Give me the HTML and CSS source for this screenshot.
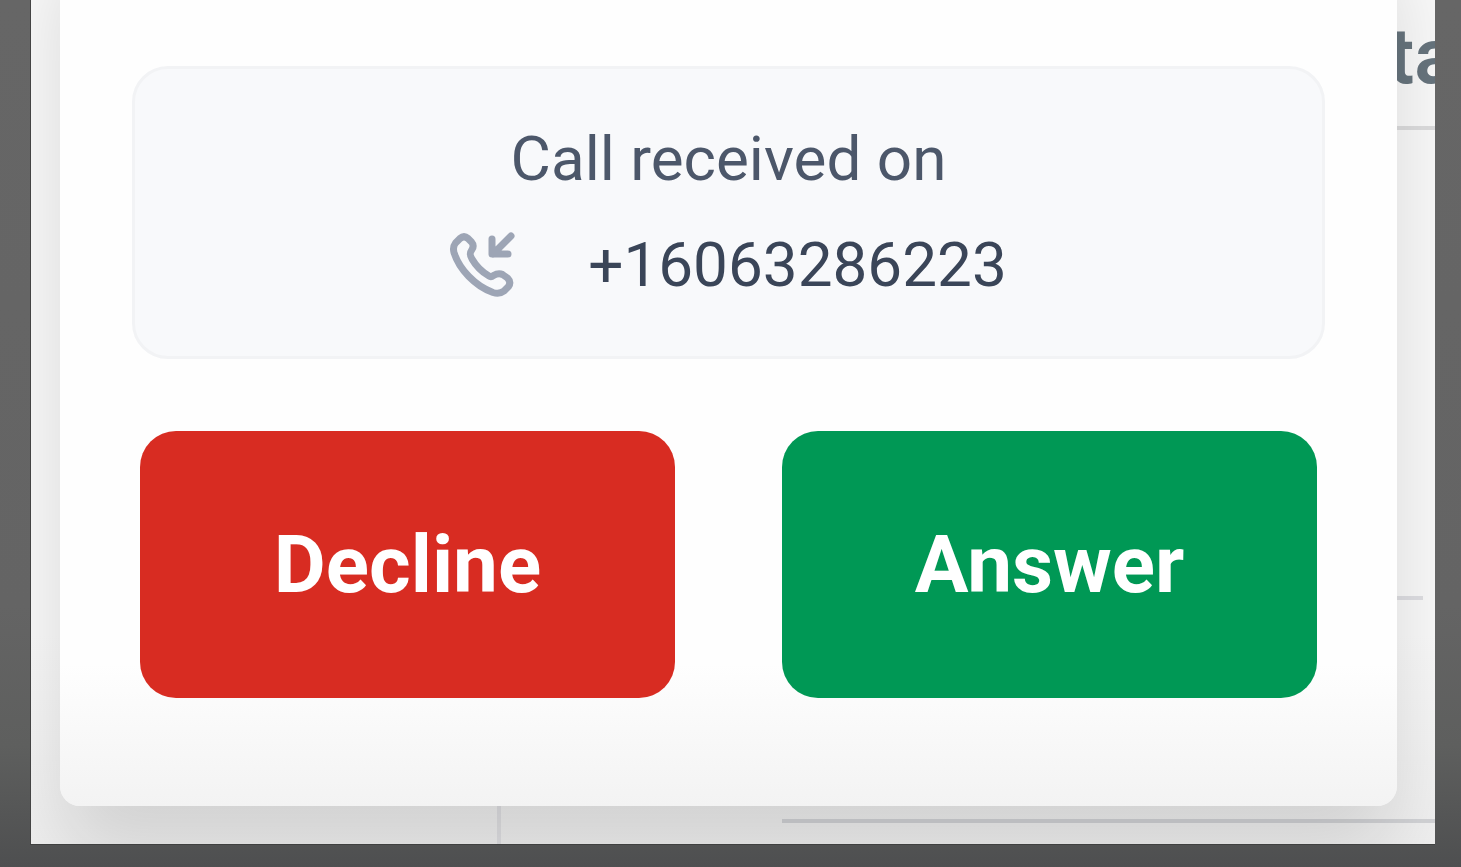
FILE: index.html
```html
<!DOCTYPE html>
<html lang="en">
<head>
<meta charset="utf-8">
<meta name="viewport" content="width=device-width, initial-scale=1">
<title>Incoming call</title>
<link rel="stylesheet" href="styles.css">
</head>
<body>
<div class="backdrop">
  <div class="screen">
    <div class="page">
      <header class="page-header"><span class="page-title">ta</span></header>
      <div class="page-section"></div>
      <div class="page-footer">
        <div class="page-side"></div>
        <div class="page-rule"></div>
      </div>
    </div>
    <main class="dialog" role="dialog" aria-label="Incoming call">
      <section class="call-info">
        <p class="call-label">Call received on</p>
        <div class="call-line">
          <svg class="call-icon" viewBox="0 0 64 64" aria-hidden="true">
            <path d="M10 5.500Q14 2 18 5.500L21.500 9Q24.500 12.500 22 16.500C19.500 20 19.500 22 22 26C26 33 32 39 39 43Q41 44.500 43.500 42.500Q48.500 39.500 52.500 41.500L57.500 45Q61.500 49 58.500 53.500L54 58Q49.500 61.500 43 59.500C25 53 9 36 4 19.500Q2.500 14 5.500 10Z"/>
            <path d="M61 3L43 21M42 6V21H58"/>
          </svg>
          <span class="call-number">+16063286223</span>
        </div>
      </section>
      <div class="actions">
        <button class="action decline" type="button">Decline</button>
        <button class="action answer" type="button">Answer</button>
      </div>
    </main>
  </div>
</div>
</body>
</html>
```
FILE: styles.css
```css
* {
  box-sizing: border-box;
}

body {
  margin: 0;
  font-family: Roboto, "Liberation Sans", sans-serif;
}

.backdrop {
  display: flex;
  min-height: 100vh;
  padding: 0 26px 22px 30px;
  background: linear-gradient(#666 0%, #646464 70%, #5e5f5e 86%, #4e4f50 100%);
}

.screen {
  display: grid;
  grid-template: 1fr / 1fr;
  flex: 1;
  overflow: hidden;
  border-left: 1px solid #444;
  border-bottom: 1px solid #404141;
  background: linear-gradient(#f9f9f9 0%, #f9f9f9 75%, #efefef 100%);
}

.page,
.dialog {
  grid-area: 1 / 1;
  min-width: 0;
}

.page {
  display: flex;
  flex-direction: column;
}

.page-header {
  display: flex;
  justify-content: flex-end;
  height: 130px;
  margin-left: 40px;
  overflow: hidden;
  border-bottom: 4px solid #dcdcdd;
}

.page-title {
  width: 47px;
  color: #67747d;
  font-size: 78px;
  font-weight: 600;
  line-height: 114px;
}

.page-section {
  height: 470px;
  margin: 0 12px 0 40px;
  border-bottom: 4px solid #dedee2;
}

.page-footer {
  display: flex;
  flex: 1;
}

.page-side {
  width: 470px;
  border-right: 4px solid #e0e0e3;
}

.page-rule {
  flex: 1;
  height: 223px;
  margin-left: 281px;
  border-bottom: 4px solid #d2d3d6;
}

.dialog {
  z-index: 1;
  margin: -80px 38px 38px 29px;
  padding: 146px 72px 107px;
  border-radius: 20px;
  background: linear-gradient(#fefefe 0%, #fefefe 84%, #f3f3f3 100%);
  box-shadow: 0 48px 80px rgba(0, 0, 0, 0.13);
}

.call-info {
  display: flex;
  flex-direction: column;
  align-items: center;
  gap: 34px;
  padding: 54px 24px 55px;
  border: 3px solid #f2f3f5;
  border-radius: 36px;
  background: #f8f9fb;
  font-size: 62px;
  line-height: 72px;
}

.call-label {
  margin: 0;
  color: #4c576a;
}

.call-line {
  display: flex;
  align-items: center;
  gap: 74px;
}

.call-icon {
  width: 64px;
  height: 64px;
  overflow: visible;
  fill: none;
  stroke: #9da5b5;
  stroke-width: 7;
  stroke-linecap: round;
  stroke-linejoin: round;
}

.call-number {
  color: #3a4558;
}

.actions {
  display: flex;
  gap: 107px;
  margin-top: 72px;
  padding: 0 8px;
}

.action {
  flex: 1;
  height: 267px;
  padding: 0;
  border: 0;
  border-radius: 36px;
  color: #fff;
  font-family: inherit;
  font-size: 80px;
  font-weight: 700;
  line-height: 96px;
  cursor: pointer;
}

.decline {
  background: #d82c22;
}

.answer {
  background: #009855;
}
```
